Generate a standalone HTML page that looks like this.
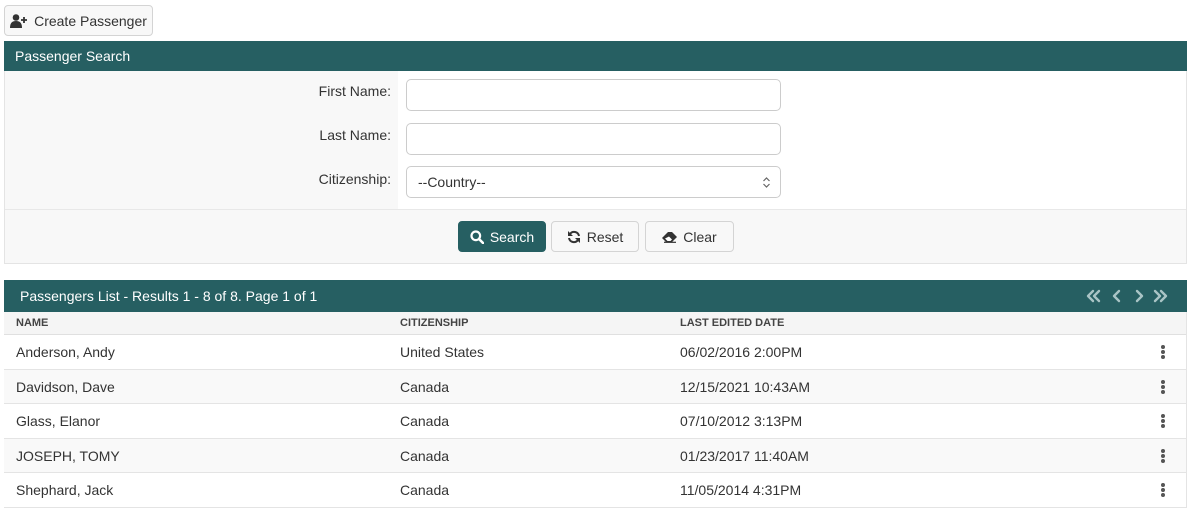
<!DOCTYPE html>
<html><head><style>
*{box-sizing:border-box;margin:0;padding:0}
body{width:1200px;height:508px;background:#fff;font-family:"Liberation Sans",sans-serif;font-size:14px;color:#333;position:relative;overflow:hidden}
.abs{position:absolute}
.btn{position:absolute;border:1px solid #d4d4d4;border-radius:4px;background:#f8f8f8;display:flex;align-items:center;justify-content:center;gap:6px;font-size:14px;color:#333}
.hdr{position:absolute;left:4px;width:1183px;background:#265f62;color:#fff;font-size:14px;display:flex;align-items:center}
.inp{position:absolute;left:406px;width:375px;height:32px;border:1px solid #ccc;border-radius:5px;background:#fff}
.lbl{position:absolute;right:809px;font-size:14px;color:#333}
.row{position:absolute;left:4px;width:1183px;height:34.5px;border-bottom:1px solid #e4e4e4;font-size:14px;color:#333}
.row span{position:absolute;top:9px}
.dots{position:absolute;left:1157px;top:10px;width:4px}
.dots i{display:block;width:4px;height:4px;border-radius:2px;background:#555;margin-bottom:1px}
</style></head><body>
<div class="btn" style="left:4px;top:5px;width:149px;height:31px">
<svg width="18" height="14" viewBox="0 0 18 14"><circle cx="6" cy="3.5" r="3.3" fill="#333"/><path d="M0 14c0-5 2-7 6-7s6 2 6 7z" fill="#333"/><path d="M14 3v6M11 6h6" stroke="#333" stroke-width="1.8"/></svg>Create Passenger</div>
<div class="hdr" style="top:41px;height:30px;padding-left:11px">Passenger Search</div>
<div class="abs" style="left:4px;top:71px;width:1183px;height:193px;background:#f8f8f8;border:1px solid #e4e4e4;border-top:none"></div>
<div class="abs" style="left:398px;top:71px;width:788px;height:139px;background:#fff"></div>
<div class="abs" style="left:5px;top:209px;width:1181px;height:1px;background:#e8e8e8"></div>
<div class="lbl" style="top:83px">First Name:</div>
<div class="lbl" style="top:127px">Last Name:</div>
<div class="lbl" style="top:171px">Citizenship:</div>
<div class="inp" style="top:79px"></div>
<div class="inp" style="top:123px"></div>
<div class="inp" style="top:166px"><span class="abs" style="left:11px;top:7px;color:#333">--Country--</span>
<svg class="abs" style="left:355px;top:9px" width="9" height="13" viewBox="0 0 9 13"><path d="M1.5 5L4.5 2 7.5 5M1.5 8l3 3 3-3" fill="none" stroke="#666" stroke-width="1.2"/></svg></div>
<div class="btn" style="left:458px;top:221px;width:88px;height:31px;background:#265f62;border-color:#265f62;color:#fff">
<svg width="14" height="14" viewBox="0 0 14 14"><circle cx="5.8" cy="5.8" r="4.3" fill="none" stroke="#fff" stroke-width="2.2"/><path d="M9 9l4 4" stroke="#fff" stroke-width="2.6" stroke-linecap="round"/></svg>Search</div>
<div class="btn" style="left:551px;top:221px;width:88px;height:31px">
<svg width="14" height="14" viewBox="0 0 14 14"><path d="M12 6A5 5 0 0 0 3 4M2 8a5 5 0 0 0 9 2" fill="none" stroke="#333" stroke-width="2"/><path d="M1 1v5h5zM13 13V8H8z" fill="#333"/></svg>Reset</div>
<div class="btn" style="left:645px;top:221px;width:89px;height:31px">
<svg width="15" height="12" viewBox="0 0 15 12"><path d="M0 7l6-6h4l5 5-5 5H4z" fill="#333"/><path d="M3 7.5l2.5 2.5h3l1.5-1.5-3-3z" fill="#fff"/><path d="M2 11.3h12" stroke="#333" stroke-width="1.2"/></svg>Clear</div>
<div class="hdr" style="top:280px;height:32px;padding-left:16px">Passengers List - Results 1 - 8 of 8. Page 1 of 1
<svg class="abs" style="left:1082px;top:9px" width="82" height="14" viewBox="0 0 82 14" fill="none" stroke="#a9c4c5" stroke-width="2.4" stroke-linecap="round" stroke-linejoin="round">
<path d="M7 2L2 7l5 5M13 2L8 7l5 5"/><path d="M33 2l-5 5 5 5"/><path d="M51 2l5 5-5 5"/><path d="M69 2l5 5-5 5M75 2l5 5-5 5"/></svg></div>
<div class="abs" style="left:4px;top:312px;width:1183px;height:23px;background:#f5f5f5;border-bottom:1px solid #e0e0e0;font-size:11px;font-weight:bold;color:#444">
<span class="abs" style="left:12px;top:5px">NAME</span><span class="abs" style="left:396px;top:5px">CITIZENSHIP</span><span class="abs" style="left:676px;top:5px">LAST EDITED DATE</span></div>
<div class="row" style="top:335px"><span style="left:12px">Anderson, Andy</span><span style="left:396px">United States</span><span style="left:676px">06/02/2016 2:00PM</span><div class="dots"><i></i><i></i><i></i></div></div>
<div class="row" style="top:369.5px;background:#f9f9f9"><span style="left:12px">Davidson, Dave</span><span style="left:396px">Canada</span><span style="left:676px">12/15/2021 10:43AM</span><div class="dots"><i></i><i></i><i></i></div></div>
<div class="row" style="top:404px"><span style="left:12px">Glass, Elanor</span><span style="left:396px">Canada</span><span style="left:676px">07/10/2012 3:13PM</span><div class="dots"><i></i><i></i><i></i></div></div>
<div class="row" style="top:438.5px;background:#f9f9f9"><span style="left:12px">JOSEPH, TOMY</span><span style="left:396px">Canada</span><span style="left:676px">01/23/2017 11:40AM</span><div class="dots"><i></i><i></i><i></i></div></div>
<div class="row" style="top:473px"><span style="left:12px">Shephard, Jack</span><span style="left:396px">Canada</span><span style="left:676px">11/05/2014 4:31PM</span><div class="dots"><i></i><i></i><i></i></div></div>
<div class="abs" style="left:1186px;top:312px;width:1px;height:196px;background:#e4e4e4"></div>
</body></html>
